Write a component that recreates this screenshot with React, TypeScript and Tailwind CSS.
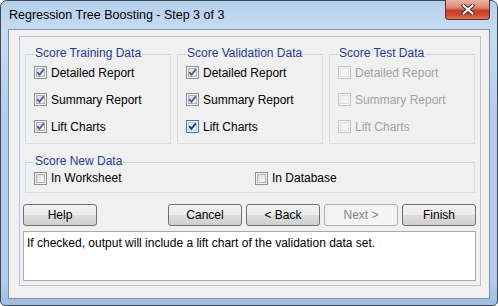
import React from 'react';

type CheckState = 'on' | 'hot' | 'off' | 'disabled';

function Box({ state }: { state: CheckState }) {
  const disabled = state === 'disabled';
  const hot = state === 'hot';
  const checked = state === 'on' || state === 'hot';
  return (
    <span
      className={
        'w-[13px] h-[13px] shrink-0 border p-[1px] flex ' +
        (disabled ? 'border-[#c5c5c5] bg-[#f4f4f4]' : hot ? 'border-[#3c7fb1] bg-[#f0f8fe]' : 'border-[#8e8f8f] bg-[#f4f4f4]')
      }
    >
      <span
        className={
          'flex-1 relative border ' +
          (disabled
            ? 'border-[#e0e0e0] bg-[#f4f4f4]'
            : hot
            ? 'border-[#a9d7f5] bg-gradient-to-br from-[#cfeafd] to-[#eef8fe]'
            : 'border-[#aeb3b9] bg-gradient-to-br from-[#dcdcdc] to-[#fbfbfb]')
        }
      >
        {checked && (
          <svg viewBox="0 0 9 9" className="absolute -left-[1px] -top-[1px] w-[9px] h-[9px]">
            <polyline
              points="1.2,4.2 3.4,6.8 7.8,1.4"
              fill="none"
              stroke={hot ? '#1c3083' : '#4a5f94'}
              strokeWidth="1.8"
            />
          </svg>
        )}
      </span>
    </span>
  );
}

function Check({ label, state }: { label: string; state: CheckState }) {
  return (
    <div className="flex items-center gap-[4px] h-[27px]">
      <Box state={state} />
      <span className={state === 'disabled' ? 'text-[#a3a3a3]' : 'text-black'}>{label}</span>
    </div>
  );
}

function Group({ title, items }: { title: string; items: [string, CheckState][] }) {
  return (
    <fieldset className="border border-[#d5dfe5] border-t-[#c9d3da] px-[8px] pb-[1px] h-[97px]">
      <legend className="px-[1px] leading-[12px] pb-[2px] text-[#1d3b8f]">{title}</legend>
      <div className="-mt-[2px]">
        {items.map(([l, s]) => (
          <Check key={l} label={l} state={s} />
        ))}
      </div>
    </fieldset>
  );
}

function Btn({ children, disabled }: { children: React.ReactNode; disabled?: boolean }) {
  return (
    <div
      className={
        'w-[74px] h-[22px] rounded-[3px] border flex items-center justify-center ' +
        (disabled
          ? 'border-[#adb2b5] bg-[#f4f4f4] text-[#838383]'
          : 'border-[#707070] bg-[linear-gradient(#f2f2f2_0%,#ebebeb_50%,#dddddd_50%,#cfcfcf_100%)] text-black')
      }
    >
      {children}
    </div>
  );
}

export default function App() {
  return (
    <div className="w-[498px] h-[306px] bg-white font-['Liberation_Sans',Arial,sans-serif] text-[12px]">
      <div className="w-full h-full rounded-t-[7px] rounded-b-[5px] border border-[#3d4856] bg-[linear-gradient(180deg,#b6d0ec_0%,#c6dcf2_10%,#b3cdea_40%,#b4cdea_92%,#9fbde2_100%)] flex flex-col">
        {/* title bar */}
        <div className="h-[28px] flex items-start shrink-0">
          <span className="pl-[8px] pt-[6px] text-[12.5px] text-black leading-[16px]">
            Regression Tree Boosting - Step 3 of 3
          </span>
          <div className="ml-auto mr-[7px] -mt-[1px] w-[45px] h-[20px] rounded-b-[4px] border border-t-0 border-[#5a2b24] bg-[linear-gradient(180deg,#eab2a4_0%,#dc8a76_40%,#c5402a_55%,#cb4a31_80%,#e07a5e_100%)] flex items-center justify-center">
            <svg viewBox="0 0 14 11" className="w-[14px] h-[11px]">
              <path d="M2.5 1.5 L11.5 9.5 M11.5 1.5 L2.5 9.5" stroke="#4b2b2b" strokeWidth="4" strokeLinecap="square" />
              <path d="M2.5 1.5 L11.5 9.5 M11.5 1.5 L2.5 9.5" stroke="#ffffff" strokeWidth="2" strokeLinecap="square" />
            </svg>
          </div>
        </div>

        {/* client area */}
        <div className="flex-1 mx-[7px] mb-[7px] border border-[#8293a7] bg-[#f0f0f0] flex flex-col">
          <div className="mt-[6px] ml-[10px] mr-[8px] mb-[12px] flex-1 border border-[#b1c3d7] pt-[10px] px-[4px] pb-[4px] flex flex-col">
            <div className="px-[1px] grid grid-cols-[146px_146px_146px] gap-[6px]">
              <Group
                title="Score Training Data"
                items={[
                  ['Detailed Report', 'on'],
                  ['Summary Report', 'on'],
                  ['Lift Charts', 'on'],
                ]}
              />
              <Group
                title="Score Validation Data"
                items={[
                  ['Detailed Report', 'on'],
                  ['Summary Report', 'on'],
                  ['Lift Charts', 'hot'],
                ]}
              />
              <Group
                title="Score Test Data"
                items={[
                  ['Detailed Report', 'disabled'],
                  ['Summary Report', 'disabled'],
                  ['Lift Charts', 'disabled'],
                ]}
              />
            </div>

            <fieldset className="mt-[11px] mx-[1px] border border-[#d5dfe5] border-t-[#c9d3da] px-[8px] h-[38px]">
              <legend className="px-[1px] leading-[12px] pb-[2px] text-[#1d3b8f]">Score New Data</legend>
              <div className="flex -mt-[2px]">
                <div className="w-[221px] flex items-center gap-[4px] h-[22px]">
                  <Box state="off" />
                  <span>In Worksheet</span>
                </div>
                <div className="flex items-center gap-[4px] h-[22px]">
                  <Box state="off" />
                  <span>In Database</span>
                </div>
              </div>
            </fieldset>

            <div className="mt-[11px] flex gap-[4px] -ml-[1px]">
              <Btn>Help</Btn>
              <div className="flex-1" />
              <Btn>Cancel</Btn>
              <Btn>&lt; Back</Btn>
              <Btn disabled>Next &gt;</Btn>
              <Btn>Finish</Btn>
            </div>

            <div className="mt-[5px] -ml-[1px] h-[50px] border border-[#abadb3] border-t-[#a6a8ae] bg-white px-[3px] pt-[2px]">
              If checked, output will include a lift chart of the validation data set.
            </div>
          </div>
        </div>
      </div>
    </div>
  );
}
